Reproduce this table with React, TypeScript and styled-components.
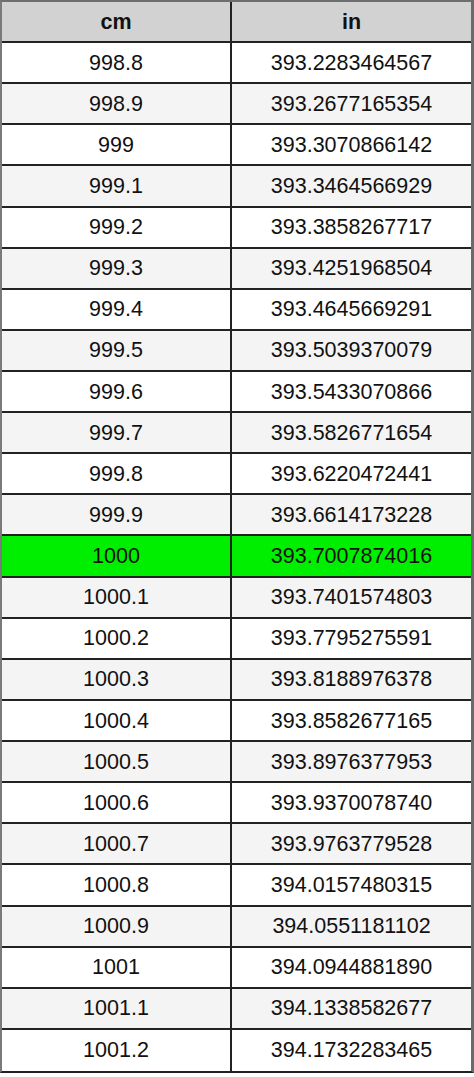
import React from "react";
import styled, { createGlobalStyle } from "styled-components";

const Global = createGlobalStyle`
  html, body { margin: 0; padding: 0; background: #ffffff; }
  body { font-family: "Liberation Sans", Arial, sans-serif; }
`;

const Table = styled.div`
  box-sizing: border-box;
  width: 474px;
  height: 1073px;
  display: grid;
  grid-template-columns: 230px 1fr;
  grid-template-rows: repeat(26, 1fr);
  border-top: 2px solid #6e6e6e;
  border-left: 2px solid #7a7a7a;
  border-right: 3px solid #6a6a6a;
  border-bottom: 2px solid #222;
  background: #222;
`;

type Kind = "head" | "odd" | "even" | "hit";

const bg: Record<Kind, string> = {
  head: "#d2d2d2",
  odd: "#ffffff",
  even: "#f4f4f4",
  hit: "#00ee00",
};

const Cell = styled.div<{ $kind: Kind; $first: boolean; $last: boolean }>`
  box-sizing: border-box;
  display: flex;
  align-items: center;
  justify-content: center;
  background: ${(p) => bg[p.$kind]};
  border-right: ${(p) => (p.$first ? "2px solid #222" : "none")};
  border-bottom: ${(p) => (p.$last ? "none" : "2px solid #222")};
  font-size: 21.5px;
  font-weight: ${(p) => (p.$kind === "head" ? 700 : 400)};
  color: #111;
  padding-top: 1px;
`;

const rows: [string, string][] = [
  ["998.8", "393.2283464567"],
  ["998.9", "393.2677165354"],
  ["999", "393.3070866142"],
  ["999.1", "393.3464566929"],
  ["999.2", "393.3858267717"],
  ["999.3", "393.4251968504"],
  ["999.4", "393.4645669291"],
  ["999.5", "393.5039370079"],
  ["999.6", "393.5433070866"],
  ["999.7", "393.5826771654"],
  ["999.8", "393.6220472441"],
  ["999.9", "393.6614173228"],
  ["1000", "393.7007874016"],
  ["1000.1", "393.7401574803"],
  ["1000.2", "393.7795275591"],
  ["1000.3", "393.8188976378"],
  ["1000.4", "393.8582677165"],
  ["1000.5", "393.8976377953"],
  ["1000.6", "393.9370078740"],
  ["1000.7", "393.9763779528"],
  ["1000.8", "394.0157480315"],
  ["1000.9", "394.0551181102"],
  ["1001", "394.0944881890"],
  ["1001.1", "394.1338582677"],
  ["1001.2", "394.1732283465"],
];

export default function App() {
  return (
    <>
      <Global />
      <Table>
        <Cell $kind="head" $first $last={false}>cm</Cell>
        <Cell $kind="head" $first={false} $last={false}>in</Cell>
        {rows.map(([cm, inch], i) => {
          const kind: Kind = cm === "1000" ? "hit" : i % 2 === 0 ? "odd" : "even";
          const last = i === rows.length - 1;
          return (
            <React.Fragment key={cm}>
              <Cell $kind={kind} $first $last={last}>{cm}</Cell>
              <Cell $kind={kind} $first={false} $last={last}>{inch}</Cell>
            </React.Fragment>
          );
        })}
      </Table>
    </>
  );
}
